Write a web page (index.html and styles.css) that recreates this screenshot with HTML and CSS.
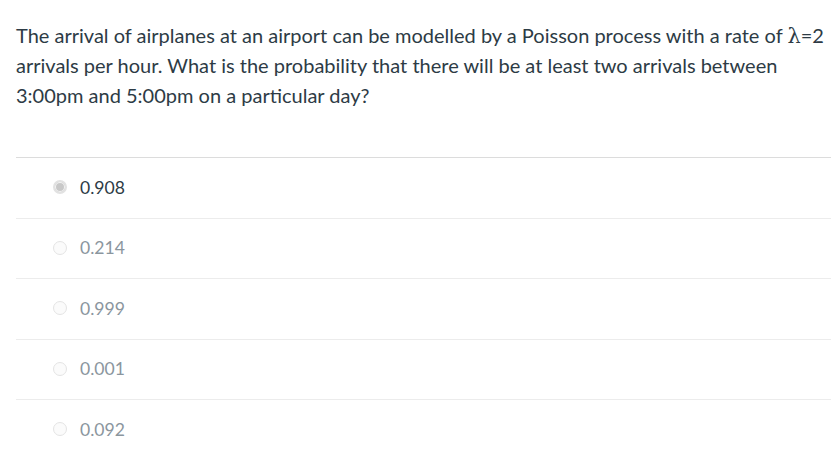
FILE: index.html
```html
<!DOCTYPE html>
<html>
<head>
<meta charset="utf-8">
<link rel="stylesheet" href="styles.css">
</head>
<body>
<div class="quiz">
  <p class="question">The arrival of airplanes at an airport can be modelled by a Poisson process with a rate of <span class="math">λ</span>=2 arrivals per hour. What is the probability that there will be at least two arrivals between 3:00pm and 5:00pm on a particular day?</p>
  <ul class="answers">
    <li class="answer selected"><span class="radio"></span><span class="label">0.908</span></li>
    <li class="answer"><span class="radio"></span><span class="label">0.214</span></li>
    <li class="answer"><span class="radio"></span><span class="label">0.999</span></li>
    <li class="answer"><span class="radio"></span><span class="label">0.001</span></li>
    <li class="answer"><span class="radio"></span><span class="label">0.092</span></li>
  </ul>
</div>
</body>
</html>
```
FILE: styles.css
```css
html, body {
  margin: 0;
  padding: 0;
  background: #fff;
}
body {
  font-family: Lato, "Noto Sans", sans-serif;
  color: #2d3b45;
}
.quiz {
  padding: 20px 0 0 16px;
}
.question {
  margin: 0 0 47px 0;
  font-size: 20px;
  line-height: 30px;
}
.math {
  font-family: "DejaVu Serif", serif;
  font-size: 21px;
  line-height: 0;
}
.answers {
  list-style: none;
  margin: 0;
  padding: 0;
  border-top: 1px solid #dcdcdc;
}
.answer {
  display: flex;
  align-items: center;
  height: 59.5px;
  border-bottom: 1px solid #ececec;
  padding-left: 37px;
  font-size: 17.6px;
  color: #8b969e;
}
.answer:last-child {
  border-bottom: none;
}
.answer.selected {
  color: #2d3b45;
}
.radio {
  box-sizing: border-box;
  width: 14px;
  height: 14px;
  border-radius: 50%;
  border: 1px solid #e4e4e4;
  background: #fbfbfb;
  margin-right: 13px;
  margin-top: -1px;
}
.selected .radio {
  border: 2px solid #e2e2e2;
  background: #c8c8c8;
  box-shadow: inset 0 0 0 1px #f4f4f4;
}
.label {
  line-height: 20px;
}
```
